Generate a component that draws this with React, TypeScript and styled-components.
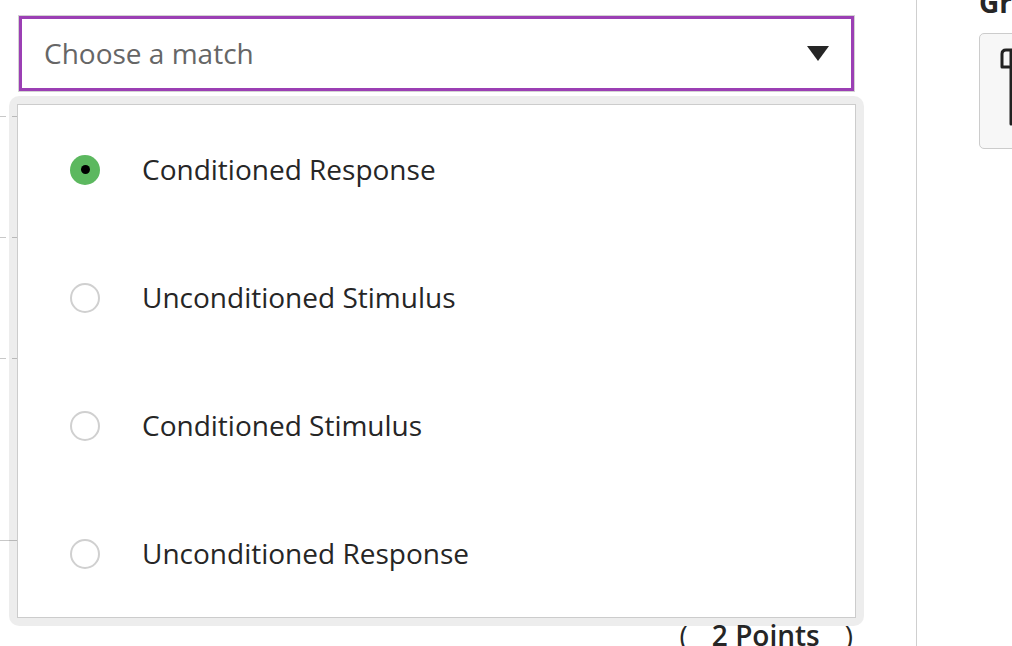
import React, { useState } from 'react';
import styled, { createGlobalStyle } from 'styled-components';

const GlobalStyle = createGlobalStyle`
  html, body {
    margin: 0;
    padding: 0;
    background: #ffffff;
    overflow: hidden;
  }
  body {
    font-family: "Open Sans", "Noto Sans", "Liberation Sans", sans-serif;
    color: #262626;
  }
`;

const Page = styled.div`
  display: flex;
  width: 1012px;
  height: 646px;
  overflow: hidden;
`;

const QuestionColumn = styled.div`
  position: relative;
  width: 917px;
  flex-shrink: 0;
  border-right: 1px solid #cfcfcf;
  box-sizing: border-box;
  display: flex;
  flex-direction: column;
`;

const Row = styled.div<{ $height: number; $dashed?: boolean }>`
  height: ${(p) => p.$height}px;
  box-sizing: border-box;
  flex-shrink: 0;
  position: relative;
  &::after {
    content: '';
    position: absolute;
    left: 0;
    bottom: 0;
    width: 480px;
    height: 1px;
    background: ${(p) =>
      p.$dashed
        ? 'repeating-linear-gradient(to right, #c8c8c8 0 6px, transparent 6px 12px)'
        : '#c8c8c8'};
  }
`;

const SelectRow = styled.div`
  padding: 16px 0 0 19px;
  height: 117px;
  box-sizing: border-box;
  flex-shrink: 0;
  position: relative;
  z-index: 2;
  &::after {
    content: '';
    position: absolute;
    left: 0;
    bottom: 0;
    width: 480px;
    height: 1px;
    background: repeating-linear-gradient(to right, #c8c8c8 0 6px, transparent 6px 12px);
  }
`;

const SelectWrap = styled.div`
  position: relative;
  width: 835px;
`;

const SelectBox = styled.button`
  display: flex;
  align-items: center;
  justify-content: space-between;
  width: 835px;
  height: 75px;
  box-sizing: border-box;
  padding: 0 22px 0 22px;
  border: 3px solid #9b3fb4;
  box-shadow: 0 0 0 1px #d2d2d2;
  background: #ffffff;
  font-family: inherit;
  font-size: 28px;
  color: #666666;
  text-align: left;
  cursor: pointer;
`;

const Placeholder = styled.span`
  line-height: 38px;
  margin-top: -2px;
`;

const Caret = styled.svg`
  width: 22px;
  height: 15px;
  flex-shrink: 0;
`;

const Menu = styled.div`
  position: absolute;
  top: calc(100% + 5px);
  left: -10px;
  width: 855px;
  box-sizing: border-box;
  padding: 8px;
  border-radius: 10px;
  background: rgba(0, 0, 0, 0.07);
  z-index: 5;
`;

const MenuList = styled.ul`
  list-style: none;
  margin: 0;
  padding: 0;
  background: #ffffff;
  border: 1px solid #cccccc;
`;

const Option = styled.li`
  display: flex;
  align-items: center;
  height: 128px;
  padding-left: 52px;
  cursor: pointer;
`;

const Radio = styled.span<{ $checked: boolean }>`
  width: 30px;
  height: 30px;
  border-radius: 50%;
  box-sizing: border-box;
  flex-shrink: 0;
  display: flex;
  align-items: center;
  justify-content: center;
  margin-top: 1px;
  background: ${(p) => (p.$checked ? '#5cb85f' : '#ffffff')};
  border: ${(p) => (p.$checked ? 'none' : '2px solid #d0d0d0')};
  &::after {
    content: '';
    display: ${(p) => (p.$checked ? 'block' : 'none')};
    width: 9px;
    height: 9px;
    border-radius: 50%;
    background: #000000;
  }
`;

const OptionLabel = styled.span`
  margin-left: 42px;
  font-size: 28px;
  line-height: 38px;
  color: #262626;
`;

const PointsRow = styled.div`
  display: flex;
  justify-content: flex-end;
  align-items: baseline;
  padding-right: 63px;
  margin-top: 75px;
  font-size: 28px;
  line-height: 38px;
`;

const Paren = styled.span`
  font-weight: 400;
`;

const Points = styled.span`
  font-weight: 600;
  margin: 0 25px 0 24px;
`;

const SidePanel = styled.div`
  flex: 1;
  padding-left: 62px;
  overflow: hidden;
`;

const SideHeading = styled.h2`
  margin: -17px 0 0 0;
  font-size: 28px;
  line-height: 38px;
  font-weight: 700;
  white-space: nowrap;
  color: #262626;
`;

const ToolBox = styled.div`
  margin-top: 12px;
  width: 120px;
  height: 116px;
  box-sizing: border-box;
  border: 1px solid #cccccc;
  border-radius: 5px;
  background: #f7f7f7;
  padding: 13px 0 0 19px;
`;

const ToolIcon = styled.svg`
  width: 40px;
  height: 80px;
  display: block;
`;

const options = [
  'Conditioned Response',
  'Unconditioned Stimulus',
  'Conditioned Stimulus',
  'Unconditioned Response',
];

export default function App() {
  const [selected, setSelected] = useState(0);

  return (
    <>
      <GlobalStyle />
      <Page>
        <QuestionColumn>
          <SelectRow>
            <SelectWrap>
              <SelectBox type="button">
                <Placeholder>Choose a match</Placeholder>
                <Caret viewBox="0 0 22 15">
                  <path d="M0 0 H22 L11 15 Z" fill="#262626" />
                </Caret>
              </SelectBox>
              <Menu>
                <MenuList>
                  {options.map((o, i) => (
                    <Option key={o} onClick={() => setSelected(i)}>
                      <Radio $checked={selected === i} />
                      <OptionLabel>{o}</OptionLabel>
                    </Option>
                  ))}
                </MenuList>
              </Menu>
            </SelectWrap>
          </SelectRow>
          <Row $height={121} $dashed />
          <Row $height={121} $dashed />
          <Row $height={182} />
          <PointsRow>
            <Paren>(</Paren>
            <Points>2 Points</Points>
            <Paren>)</Paren>
          </PointsRow>
        </QuestionColumn>
        <SidePanel>
          <SideHeading>Grade</SideHeading>
          <ToolBox>
            <ToolIcon viewBox="0 0 40 80">
              <path
                d="M3 20 V7 Q3 3 7 3 H16 M3 20 H10 M12 3 V77"
                fill="none"
                stroke="#222222"
                strokeWidth="3"
                strokeLinecap="round"
                strokeLinejoin="round"
              />
            </ToolIcon>
          </ToolBox>
        </SidePanel>
      </Page>
    </>
  );
}
